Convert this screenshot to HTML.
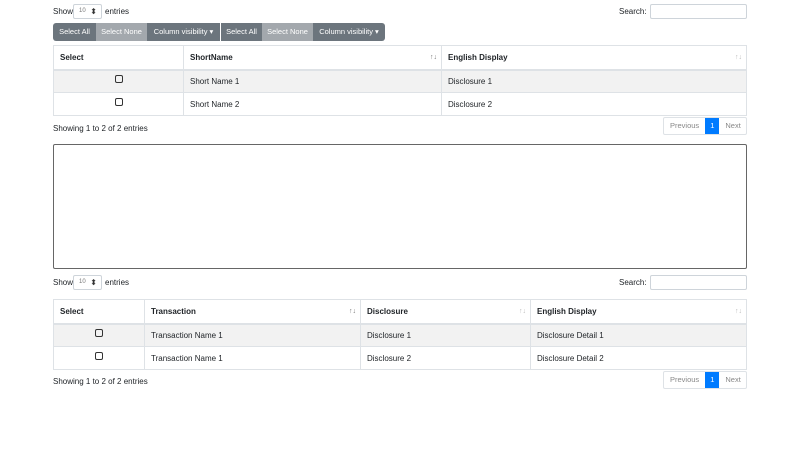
<!DOCTYPE html>
<html><head><style>
*{box-sizing:border-box}
body{margin:0;width:800px;height:450px;background:#fff;font-family:"Liberation Sans",sans-serif;font-size:8px;color:#212529;position:relative;overflow:hidden}
.abs{position:absolute;white-space:nowrap}
.sel{border:1px solid #ced4da;border-radius:2px;background:#fff;font-size:6px;color:#777;padding:3px 0 0 5px}
.sel:after{content:"⬍";position:absolute;right:4px;top:2px;font-size:8px;color:#333}
.search{border:1px solid #ced4da;border-radius:2px;background:#fff}
.btns{display:flex;height:18px;border-radius:3px;overflow:hidden}
.btns div{color:#fff;line-height:18px;padding:0;text-align:center;font-size:7.5px;white-space:nowrap;overflow:hidden}
.d{background:#6c757d}.l{background:#a3a8ad}
table{position:absolute;border-collapse:collapse;border:1px solid #dee2e6;left:53px;width:694px}
td,th{border-left:1px solid #dee2e6;padding:0 6px;text-align:left;font-size:8px}
th{height:24px;border-bottom:2px solid #dee2e6;font-weight:bold;position:relative}
th .s{position:absolute;right:4px;top:8px;color:#bbb;font-size:7px;font-weight:normal}
td{height:23px;border-top:1px solid #dee2e6}
tr.g td{background:#f2f2f2}
.cb{display:block;margin:-4px auto 0;width:8px;height:8px;border:1px solid #333;border-radius:2px}
.pg{display:flex;height:18px;border:1px solid #dee2e6;border-radius:2px;overflow:hidden}
.pg div{line-height:16px;padding:0 6px;color:#888;font-size:7.5px}
.pg .a{background:#007bff;color:#fff;padding:0 5px}
</style></head><body>
<div class="abs" style="left:53px;top:7px">Show</div>
<div class="abs sel" style="left:73px;top:4px;width:29px;height:15px">10</div>
<div class="abs" style="left:105px;top:7px">entries</div>
<div class="abs" style="left:619px;top:7px">Search:</div>
<div class="abs search" style="left:650px;top:4px;width:97px;height:15px"></div>
<div class="abs btns" style="left:53px;top:23px;width:332px">
<div class="d" style="width:43px">Select All</div><div class="l" style="width:51px">Select None</div><div class="d" style="width:73px">Column visibility ▾</div>
<div class="d" style="width:42px;border-left:1px solid #fff">Select All</div><div class="l" style="width:51px">Select None</div><div class="d" style="width:72px">Column visibility ▾</div>
</div>
<table style="top:45px">
<tr><th style="width:130px">Select</th><th style="width:258px">ShortName<span class="s" style="color:#777">↑↓</span></th><th>English Display<span class="s">↑↓</span></th></tr>
<tr class="g"><td><span class="cb"></span></td><td>Short Name 1</td><td>Disclosure 1</td></tr>
<tr><td><span class="cb"></span></td><td>Short Name 2</td><td>Disclosure 2</td></tr>
</table>
<div class="abs" style="left:53px;top:124px">Showing 1 to 2 of 2 entries</div>
<div class="abs pg" style="left:663px;top:117px;width:84px"><div>Previous</div><div class="a">1</div><div>Next</div></div>
<div class="abs" style="left:53px;top:144px;width:694px;height:125px;border:1px solid #666;border-radius:2px"></div>
<div class="abs" style="left:53px;top:278px">Show</div>
<div class="abs sel" style="left:73px;top:275px;width:29px;height:15px">10</div>
<div class="abs" style="left:105px;top:278px">entries</div>
<div class="abs" style="left:619px;top:278px">Search:</div>
<div class="abs search" style="left:650px;top:275px;width:97px;height:15px"></div>
<table style="top:299px">
<tr><th style="width:91px">Select</th><th style="width:216px">Transaction<span class="s" style="color:#777">↑↓</span></th><th style="width:170px">Disclosure<span class="s">↑↓</span></th><th>English Display<span class="s">↑↓</span></th></tr>
<tr class="g"><td><span class="cb"></span></td><td>Transaction Name 1</td><td>Disclosure 1</td><td>Disclosure Detail 1</td></tr>
<tr><td><span class="cb"></span></td><td>Transaction Name 1</td><td>Disclosure 2</td><td>Disclosure Detail 2</td></tr>
</table>
<div class="abs" style="left:53px;top:377px">Showing 1 to 2 of 2 entries</div>
<div class="abs pg" style="left:663px;top:371px;width:84px"><div>Previous</div><div class="a">1</div><div>Next</div></div>
</body></html>
